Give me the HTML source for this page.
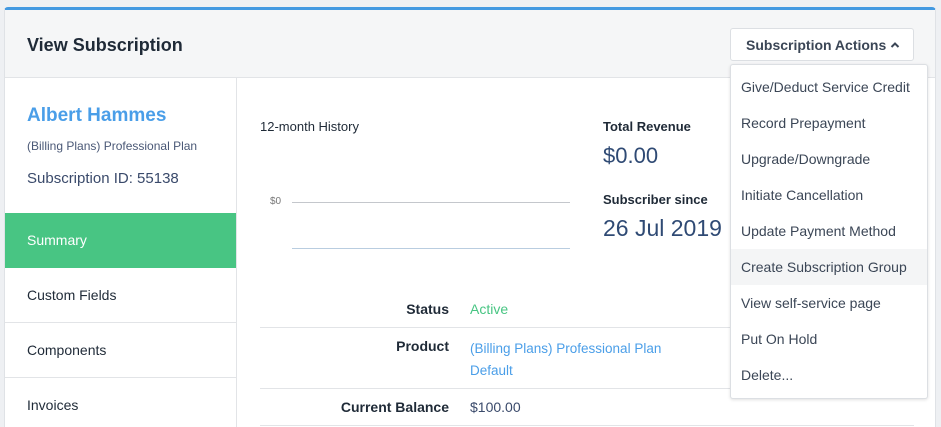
<!DOCTYPE html>
<html><head><meta charset="utf-8"><style>
*{box-sizing:border-box;margin:0;padding:0}
html,body{width:941px;height:427px;overflow:hidden}
body{background:#eef0f3;font-family:"Liberation Sans",sans-serif;color:#2d3748;position:relative}
.card{position:absolute;left:4px;top:7px;width:932px;height:430px;background:#fff;border:1px solid #dfe2e6;border-top:3px solid #4299e1;border-radius:4px 4px 0 0}
.hdr{position:absolute;left:0;top:0;right:0;height:68px;background:#f5f6f7;border-bottom:1px solid #e2e4e7}
.hdr h1{position:absolute;left:22px;top:25px;font-size:18px;font-weight:bold;color:#1f2a37}
.side{position:absolute;left:0;top:68px;width:232px;bottom:0;border-right:1px solid #e2e4e7}
.abs{position:absolute;white-space:nowrap}
.nav{position:absolute;left:0;width:231px;height:55px;border-bottom:1px solid #e2e4e7;font-size:14px;padding:19px 22px;color:#1f2a37}
.btn{position:absolute;left:730px;top:28px;width:184px;height:33px;background:#fff;border:1px solid #dcdfe3;border-radius:3px;font-size:14px;font-weight:bold;color:#3b4656;padding:8px 15px;white-space:nowrap}
.dd{position:absolute;left:730px;top:64px;width:198px;height:335px;background:#fff;border:1px solid #dcdfe3;border-radius:3px;box-shadow:0 1px 3px rgba(0,0,0,.12)}
.dd div{height:36px;font-size:14px;color:#3b4656;padding:10px 10px 0;white-space:nowrap}
.row{position:absolute;left:260px;width:654px;border-bottom:1px solid #e2e4e7}
.lbl{position:absolute;right:465px;font-weight:bold;font-size:14px;color:#1f2a37;white-space:nowrap}
.val{position:absolute;left:210px;font-size:14px;white-space:nowrap}
</style></head><body>
<div class="card">
<div class="hdr"><h1>View Subscription</h1></div>
<div class="side">
<div class="abs" style="left:22px;top:27px;font-size:19px;font-weight:bold;color:#4a9ee8">Albert Hammes</div>
<div class="abs" style="left:22px;top:61px;font-size:12px;color:#4a5876">(Billing Plans) Professional Plan</div>
<div class="abs" style="left:22px;top:92px;font-size:15px;color:#3a4a6b">Subscription ID: 55138</div>
<div class="nav" style="top:135px;background:#48c583;color:#fff;border-bottom:none">Summary</div>
<div class="nav" style="top:190px">Custom Fields</div>
<div class="nav" style="top:245px">Components</div>
<div class="nav" style="top:300px">Invoices</div>
</div>
</div>
<div class="abs" style="left:260px;top:119px;font-size:13px;color:#1f2a37">12-month History</div>
<div class="abs" style="left:270px;top:196px;font-size:10px;color:#777">$0</div>
<div class="abs" style="left:292px;top:202px;width:278px;height:1px;background:#c4c7cc"></div>
<div class="abs" style="left:292px;top:248px;width:278px;height:1px;background:#b9cde0"></div>
<div class="abs" style="left:603px;top:119px;font-size:13px;font-weight:bold;color:#1f2a37">Total Revenue</div>
<div class="abs" style="left:603px;top:143px;font-size:22px;color:#2f4a74">$0.00</div>
<div class="abs" style="left:603px;top:192px;font-size:13px;font-weight:bold;color:#1f2a37">Subscriber since</div>
<div class="abs" style="left:603px;top:215px;font-size:23px;color:#2f4a74">26 Jul 2019</div>
<div class="row" style="top:290px;height:38px"><span class="lbl" style="top:11px">Status</span><span class="val" style="top:11px;color:#48c583">Active</span></div>
<div class="row" style="top:328px;height:61px"><span class="lbl" style="top:10px">Product</span><span class="val" style="top:10px;color:#4a9ee8;font-size:13.5px;line-height:22px">(Billing Plans) Professional Plan<br>Default</span></div>
<div class="row" style="top:389px;height:37px"><span class="lbl" style="top:10px">Current Balance</span><span class="val" style="top:10px;color:#3a4a6b">$100.00</span></div>
<div class="btn">Subscription Actions <svg width="10" height="8" viewBox="0 0 10 8" style="vertical-align:1px"><path d="M1.5 6 L5 2.5 L8.5 6" fill="none" stroke="#3b4656" stroke-width="2"/></svg></div>
<div class="dd"><div style="margin-top:4px">Give/Deduct Service Credit</div><div>Record Prepayment</div><div>Upgrade/Downgrade</div><div>Initiate Cancellation</div><div>Update Payment Method</div><div style="background:#f4f5f6">Create Subscription Group</div><div>View self-service page</div><div>Put On Hold</div><div>Delete...</div></div>
</body></html>
